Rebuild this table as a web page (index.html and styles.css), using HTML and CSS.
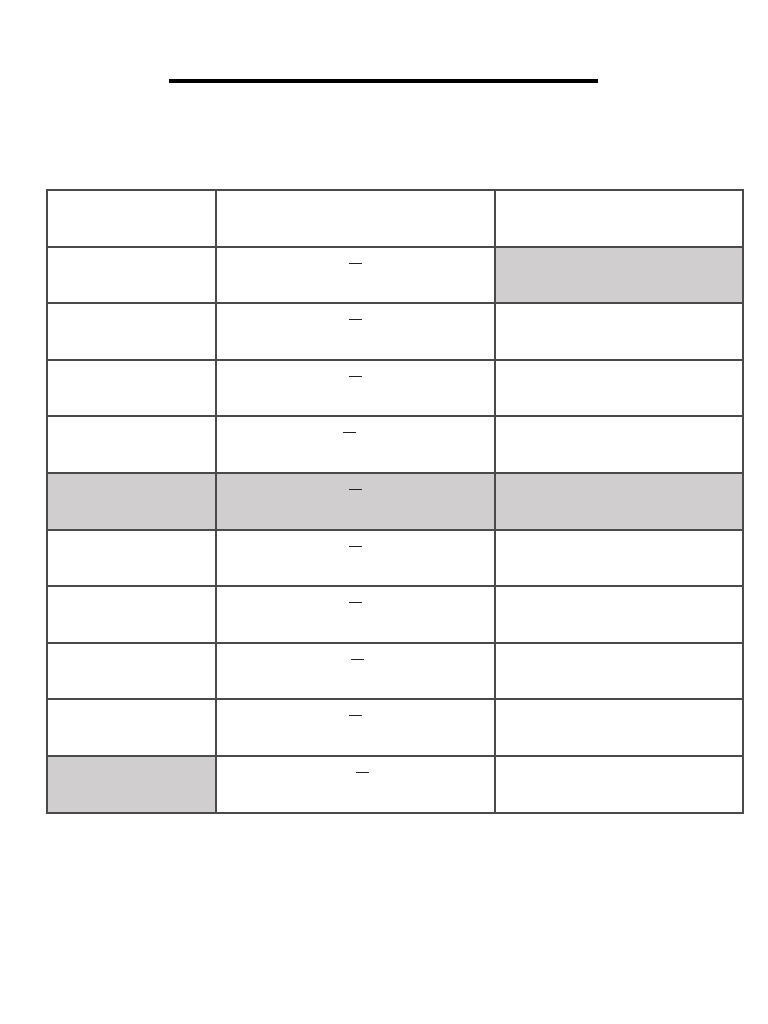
FILE: index.html
```html
<!DOCTYPE html>
<html>
<head>
<meta charset="utf-8">
<link rel="stylesheet" href="styles.css">
</head>
<body>
<div class="page">
  <div class="title-rule"></div>
  <table class="grid">
    <colgroup><col class="c1"><col class="c2"><col class="c3"></colgroup>
    <tr><td></td><td class="mid"></td><td></td></tr>
    <tr><td></td><td class="mid"><span class="dash"></span></td><td class="shade"></td></tr>
    <tr><td></td><td class="mid"><span class="dash"></span></td><td></td></tr>
    <tr><td></td><td class="mid"><span class="dash"></span></td><td></td></tr>
    <tr><td></td><td class="mid"><span class="dash dash-left"></span></td><td></td></tr>
    <tr class="shade-row"><td></td><td class="mid"><span class="dash"></span></td><td></td></tr>
    <tr><td></td><td class="mid"><span class="dash"></span></td><td></td></tr>
    <tr><td></td><td class="mid"><span class="dash"></span></td><td></td></tr>
    <tr><td></td><td class="mid"><span class="dash dash-right"></span></td><td></td></tr>
    <tr><td></td><td class="mid"><span class="dash"></span></td><td></td></tr>
    <tr><td class="shade"></td><td class="mid"><span class="dash dash-far"></span></td><td></td></tr>
  </table>
</div>
</body>
</html>
```
FILE: styles.css
```css
html, body {
  margin: 0;
  padding: 0;
  background: #ffffff;
  font-family: "Liberation Sans", Arial, sans-serif;
}
.page {
  width: 768px;
  height: 1024px;
  padding-top: 79px;
  box-sizing: border-box;
}
.title-rule {
  margin-left: 169px;
  width: 429px;
  height: 4px;
  background: #000000;
}
.grid {
  margin-top: 106px;
  margin-left: 46px;
  border-collapse: collapse;
  table-layout: fixed;
  width: 696px;
  border: 2px solid #4a4a4a;
}
.c1 { width: 169px; }
.c2 { width: 279px; }
.c3 { width: 248px; }
.grid td {
  height: 56.6px;
  padding: 0;
  border: 2px solid #4a4a4a;
  vertical-align: top;
  box-sizing: border-box;
}
.grid td.mid {
  border-left: 1px solid #000000;
}
.shade, .shade-row td {
  background: #d0cece;
}
.dash {
  display: block;
  width: 13px;
  height: 0;
  margin-top: 15px;
  margin-left: 132px;
  border-top: 1.5px solid #222222;
}
.dash-left { margin-left: 126px; }
.dash-right { margin-left: 134px; }
.dash-far { margin-left: 139px; }
```
